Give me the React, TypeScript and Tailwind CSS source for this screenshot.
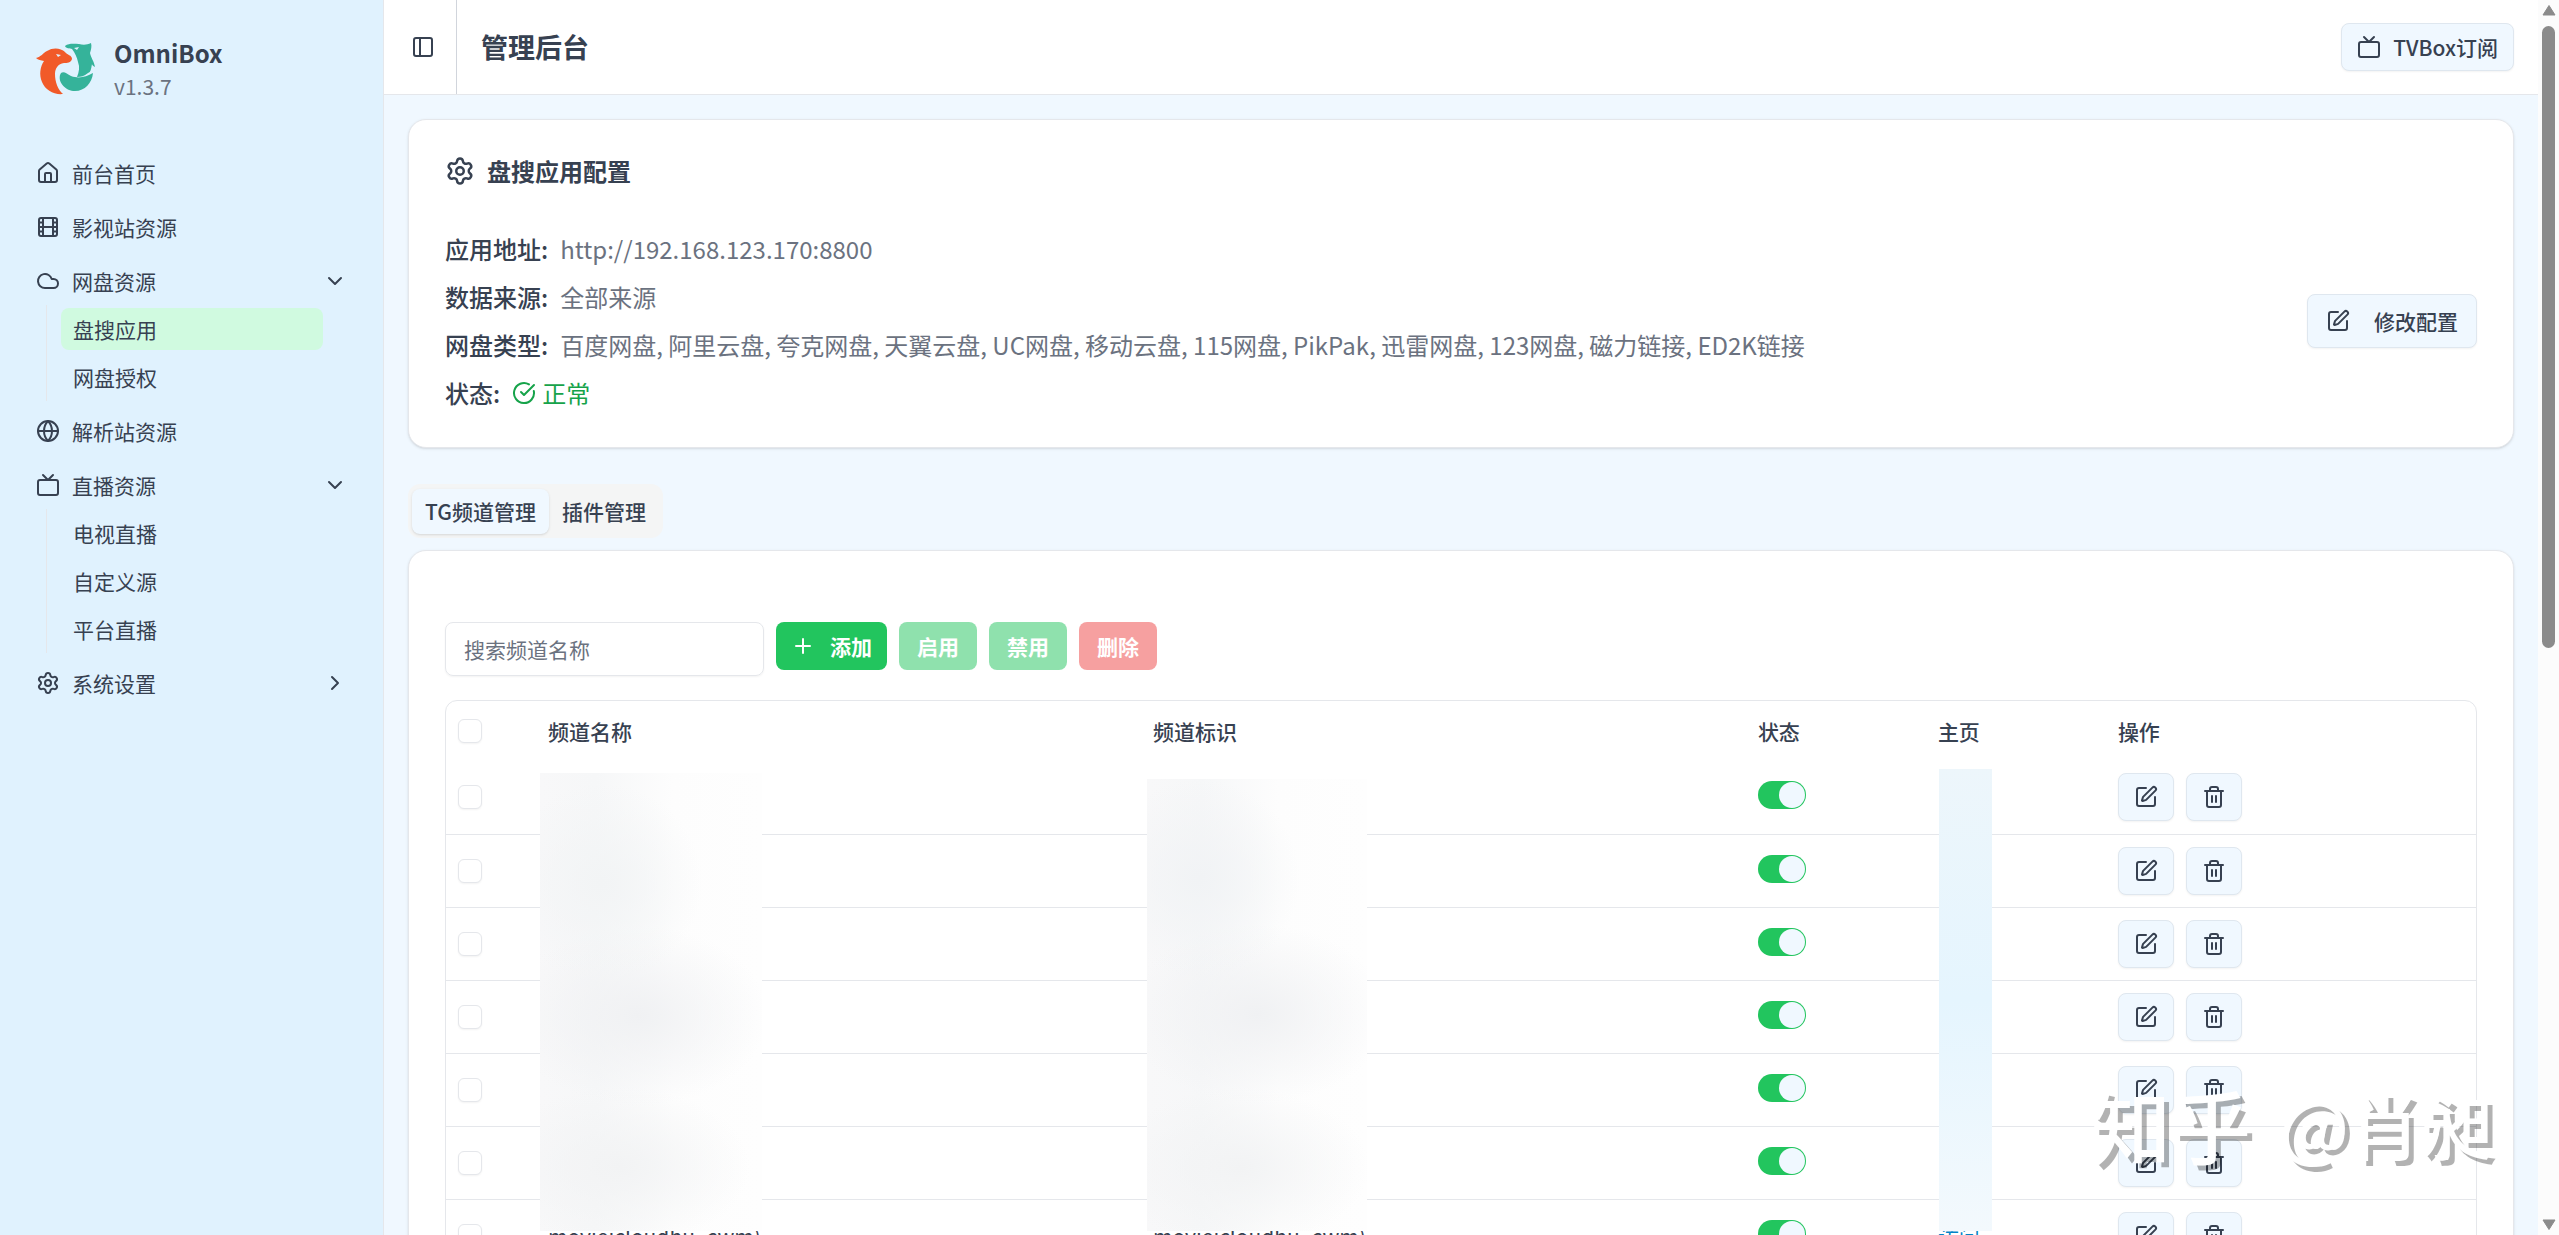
import {
  ChevronDown,
  ChevronRight,
  CircleCheckBig,
  Cloud,
  Film,
  Globe,
  House,
  PanelLeft,
  Plus,
  Settings,
  SquarePen,
  Trash2,
  Tv,
} from "lucide-react";

const rows = [1, 2, 3, 4, 5, 6, 7];

const Logo = () => {
  return (
    <svg viewBox="0 0 72 64" className="h-[64px] w-[72px]" aria-hidden="true">
      <path
        fill="#f15a29"
        d="M6 22 C11 21 13 17 17 15 C23 11 31 12 35 16 C37 19 42 19 42 23 C41 27 37 27 34 27 C28 28 25 32 25 38 C25 46 28 54 33 58 C24 59 15 54 12 46 C9 39 10 31 14 25 C11 24 8 24 6 22 Z"
      />
      <path
        fill="#35b39a"
        d="M35 10 C39 7 44 8 49 8 C53 9 57 9 61 7 C62 10 61 14 60 17 C61 22 64 25 65 31 C63 30 62 29 62 28 C61 33 61 36 58 37 C54 40 51 41 47 41 C49 36 50 31 48 26 C47 21 45 17 42 13 C40 12 36 13 35 10 Z"
      />
      <path
        fill="#35b39a"
        d="M31 37 C34 35 37 38 41 40 C49 43 56 41 63 37 C62 47 55 55 45 55 C36 55 28 47 30 39 Z"
      />
      <path fill="#e0f2fe" d="M26 18 l5 1 l-3 2 Z M44 12 l5 -1 l-2 3 Z" />
    </svg>
  );
};

const MenuLink = ({ icon: Icon, label }: { icon: any; label: string }) => {
  return (
    <a href="#" className="flex h-12 items-center gap-3 rounded-lg px-3">
      <Icon size={24} />
      <span>{label}</span>
    </a>
  );
};

const MenuGroup = ({
  icon: Icon,
  label,
  items,
  active,
}: {
  icon: any;
  label: string;
  items?: string[];
  active?: string;
}) => {
  const Chevron = items ? ChevronDown : ChevronRight;
  return (
    <div>
      <button
        type="button"
        className="flex h-12 w-full items-center gap-3 rounded-lg px-3"
      >
        <Icon size={24} />
        <span>{label}</span>
        <Chevron size={24} className="ml-auto" />
      </button>
      {items && (
        <div className="mr-[21px] ml-[22px] flex flex-col gap-1.5 border-l border-gray-200 py-[3px] pr-[15px] pl-3.5">
          {items.map((item) => (
            <a
              key={item}
              href="#"
              className={
                item === active
                  ? "flex h-[42px] items-center rounded-lg bg-[#d0fae0] px-3"
                  : "flex h-[42px] items-center rounded-lg px-3"
              }
            >
              {item}
            </a>
          ))}
        </div>
      )}
    </div>
  );
};

const Sidebar = () => {
  return (
    <aside className="flex w-96 shrink-0 flex-col border-r border-gray-200 bg-[#e0f2fe] px-6 pt-[35px]">
      <div className="flex h-[66px] items-center gap-3 pl-1.5">
        <Logo />
        <div>
          <div className="text-[24px] leading-9 font-bold">OmniBox</div>
          <div className="leading-[30px] text-[#6b7280]">v1.3.7</div>
        </div>
      </div>
      <nav className="mt-12 flex flex-col gap-1.5">
        <MenuLink icon={House} label="前台首页" />
        <MenuLink icon={Film} label="影视站资源" />
        <MenuGroup
          icon={Cloud}
          label="网盘资源"
          items={["盘搜应用", "网盘授权"]}
          active="盘搜应用"
        />
        <MenuLink icon={Globe} label="解析站资源" />
        <MenuGroup
          icon={Tv}
          label="直播资源"
          items={["电视直播", "自定义源", "平台直播"]}
        />
        <MenuGroup icon={Settings} label="系统设置" />
      </nav>
    </aside>
  );
};

const Header = () => {
  return (
    <header className="flex h-[95px] shrink-0 items-center border-b border-gray-200 bg-white pr-6">
      <button type="button" aria-label="切换侧边栏" className="pr-[21px] pl-[27px]">
        <PanelLeft size={24} />
      </button>
      <div className="w-px self-stretch bg-gray-300"></div>
      <h1 className="ml-6 text-[27px] font-bold">管理后台</h1>
      <button
        type="button"
        className="ml-auto flex h-12 items-center gap-3 rounded-lg border border-[#dfe7ef] bg-[#f0f8ff] px-[15px] font-medium shadow-xs"
      >
        <Tv size={24} />
        TVBox订阅
      </button>
    </header>
  );
};

const ConfigCard = () => {
  return (
    <section className="rounded-[18px] border border-gray-200 bg-white p-9 shadow-sm">
      <h2 className="flex h-[30px] items-center gap-3 text-[24px] font-bold">
        <Settings size={30} />
        盘搜应用配置
      </h2>
      <div className="mt-[45px] flex items-center justify-between gap-6">
        <dl className="flex flex-col gap-3 text-[24px] leading-9">
          <div className="flex gap-3">
            <dt className="font-medium">应用地址:</dt>
            <dd className="text-[#6b7280]">http://192.168.123.170:8800</dd>
          </div>
          <div className="flex gap-3">
            <dt className="font-medium">数据来源:</dt>
            <dd className="text-[#6b7280]">全部来源</dd>
          </div>
          <div className="flex gap-3">
            <dt className="font-medium">网盘类型:</dt>
            <dd className="text-[#6b7280]">
              百度网盘, 阿里云盘, 夸克网盘, 天翼云盘, UC网盘, 移动云盘, 115网盘,
              PikPak, 迅雷网盘, 123网盘, 磁力链接, ED2K链接
            </dd>
          </div>
          <div className="flex gap-3">
            <dt className="font-medium">状态:</dt>
            <dd className="flex items-center gap-1.5 text-[#16a34a]">
              <CircleCheckBig size={24} />
              正常
            </dd>
          </div>
        </dl>
        <button
          type="button"
          className="flex h-[54px] shrink-0 items-center gap-6 rounded-lg border border-[#dfe7ef] bg-[#f0f8ff] px-[18px] font-medium shadow-xs"
        >
          <SquarePen size={24} />
          修改配置
        </button>
      </div>
    </section>
  );
};

const Tabs = () => {
  return (
    <div
      role="tablist"
      className="mt-9 flex h-[54px] w-fit items-center rounded-xl bg-[#f4f5f5] p-1 font-medium"
    >
      <button
        type="button"
        role="tab"
        aria-selected="true"
        className="h-[45px] rounded-lg bg-[#f0f8ff] px-[13px] shadow-sm"
      >
        TG频道管理
      </button>
      <button
        type="button"
        role="tab"
        aria-selected="false"
        className="h-[45px] rounded-lg px-[13px]"
      >
        插件管理
      </button>
    </div>
  );
};

const Check = ({ label }: { label: string }) => {
  return (
    <input
      type="checkbox"
      aria-label={label}
      className="block size-6 appearance-none rounded-md border border-gray-200 bg-white shadow-xs"
    />
  );
};

const Toggle = ({ label }: { label: string }) => {
  return (
    <input
      type="checkbox"
      role="switch"
      aria-label={label}
      defaultChecked
      className="mb-1 block h-7 w-12 appearance-none rounded-full bg-[#22c55e] p-px before:ml-5 before:block before:size-[26px] before:rounded-full before:bg-[#f0f8ff]"
    />
  );
};

// Frosted strips that hide the channel names, ids and home pages
const NameMask = () => {
  return (
    <div className="absolute top-3 left-1 z-10 h-[458px] w-[222px] bg-white bg-[radial-gradient(ellipse_100px_100px_at_28%_24%,#f2f4f5,transparent),radial-gradient(ellipse_130px_90px_at_44%_53%,#f0f1f3,transparent),radial-gradient(ellipse_130px_80px_at_36%_86%,#f2f3f4,transparent),linear-gradient(to_right,#f8f8f9,#f6f7f8_25%,#fdfdfd_60%,#fefefe)]"></div>
  );
};

const IdMask = () => {
  return (
    <div className="absolute top-[18px] left-1.5 z-10 h-[452px] w-[220px] bg-white bg-[radial-gradient(ellipse_100px_100px_at_24%_22%,#f1f3f5,transparent),radial-gradient(ellipse_130px_90px_at_50%_52%,#f0f1f3,transparent),radial-gradient(ellipse_130px_80px_at_42%_86%,#f2f3f4,transparent),linear-gradient(to_right,#f8f8f9,#f6f7f8_25%,#fdfdfd_60%,#fefefe)]"></div>
  );
};

const LinkMask = () => {
  return (
    <div className="absolute top-2 left-[13px] z-10 h-[462px] w-[53px] bg-linear-to-b from-[#edf6fb] via-[#e5f5fe] to-[#f3f9fd]"></div>
  );
};

const ChannelTable = () => {
  return (
    <div className="mt-6 rounded-xl border border-gray-200">
      <table className="w-full table-fixed text-left">
        <thead>
          <tr className="h-[60px]">
            <th className="w-[90px] px-3">
              <Check label="全选" />
            </th>
            <th className="w-[29.8%] px-3 font-medium">频道名称</th>
            <th className="w-[29.8%] px-3 font-medium">频道标识</th>
            <th className="w-[180px] px-3 font-medium">状态</th>
            <th className="w-[180px] px-3 font-medium">主页</th>
            <th className="px-3 font-medium">操作</th>
          </tr>
        </thead>
        <tbody>
          {rows.map((row) => (
            <tr key={row} className="h-[73px] border-b border-gray-200">
              <td className="px-3">
                <Check label={`选择频道 ${row}`} />
              </td>
              <td className="relative px-3">
                {row === 1 && <NameMask />}
                {row === 7 && "movieicloudhu_cwm)"}
              </td>
              <td className="relative px-3">
                {row === 1 && <IdMask />}
                {row === 7 && "movieicloudhu_cwm)"}
              </td>
              <td className="px-3">
                <Toggle label={`启用频道 ${row}`} />
              </td>
              <td className="relative px-3">
                {row === 1 && <LinkMask />}
                {row === 7 && (
                  <a href="#" className="text-[#0284c7]">
                    访问
                  </a>
                )}
              </td>
              <td className="px-3">
                <div className="flex gap-3">
                  <button
                    type="button"
                    aria-label="编辑"
                    className="flex h-12 w-14 items-center justify-center rounded-lg border border-[#dfe7ef] bg-[#f0f8ff] shadow-xs"
                  >
                    <SquarePen size={24} />
                  </button>
                  <button
                    type="button"
                    aria-label="删除"
                    className="flex h-12 w-14 items-center justify-center rounded-lg border border-[#dfe7ef] bg-[#f0f8ff] shadow-xs"
                  >
                    <Trash2 size={24} />
                  </button>
                </div>
              </td>
            </tr>
          ))}
        </tbody>
      </table>
    </div>
  );
};

const ChannelCard = () => {
  return (
    <section className="mt-3 rounded-[18px] border border-gray-200 bg-white px-9 pt-[71px] pb-9 shadow-sm">
      <div className="flex items-start gap-3">
        <input
          type="text"
          aria-label="搜索频道名称"
          placeholder="搜索频道名称"
          className="h-[54px] w-[319px] rounded-lg border border-gray-200 px-[18px] shadow-xs placeholder:text-[#6b7280]"
        />
        <button
          type="button"
          className="flex h-12 items-center gap-[15px] rounded-lg bg-[#22c55e] px-[15px] font-bold text-white"
        >
          <Plus size={24} />
          添加
        </button>
        <button
          type="button"
          disabled
          className="h-12 rounded-lg bg-[#22c55e] px-[18px] font-bold text-white opacity-50"
        >
          启用
        </button>
        <button
          type="button"
          disabled
          className="h-12 rounded-lg bg-[#22c55e] px-[18px] font-bold text-white opacity-50"
        >
          禁用
        </button>
        <button
          type="button"
          disabled
          className="h-12 rounded-lg bg-[#ef4444] px-[18px] font-bold text-white opacity-50"
        >
          删除
        </button>
      </div>
      <ChannelTable />
    </section>
  );
};

const ScrollBar = () => {
  return (
    <div className="flex w-[21px] shrink-0 flex-col items-center bg-[#fcfcfc] py-1">
      <svg viewBox="0 0 14 12" className="h-3 w-3.5" fill="#8b8b8b">
        <path d="M7 1.5 L13 11 H1 Z" stroke="#8b8b8b" strokeLinejoin="round" />
      </svg>
      <div className="mt-2.5 h-[622px] w-[13px] rounded-full bg-[#8b8b8b]"></div>
      <svg viewBox="0 0 14 12" className="mt-auto h-3 w-3.5" fill="#8b8b8b">
        <path d="M7 10.5 L13 1 H1 Z" stroke="#8b8b8b" strokeLinejoin="round" />
      </svg>
    </div>
  );
};

const App = () => {
  return (
    <div className="flex h-screen overflow-hidden bg-[#f0f8ff] font-['Noto_Sans_CJK_SC',sans-serif] text-[21px] leading-[30px] text-[#374151]">
      <Sidebar />
      <div className="flex min-w-0 flex-1 flex-col">
        <Header />
        <main className="min-h-0 flex-1 overflow-hidden p-6">
          <ConfigCard />
          <Tabs />
          <ChannelCard />
        </main>
      </div>
      <ScrollBar />
      <div className="pointer-events-none fixed right-[66px] bottom-[68px] z-20 flex items-center gap-7 text-[72px] leading-[88px] font-medium text-white [text-shadow:5px_5px_0_rgba(0,0,0,0.3)]">
        <span className="text-[80px]">知乎</span>
        <span>@肖昶</span>
      </div>
    </div>
  );
};

export default App;
